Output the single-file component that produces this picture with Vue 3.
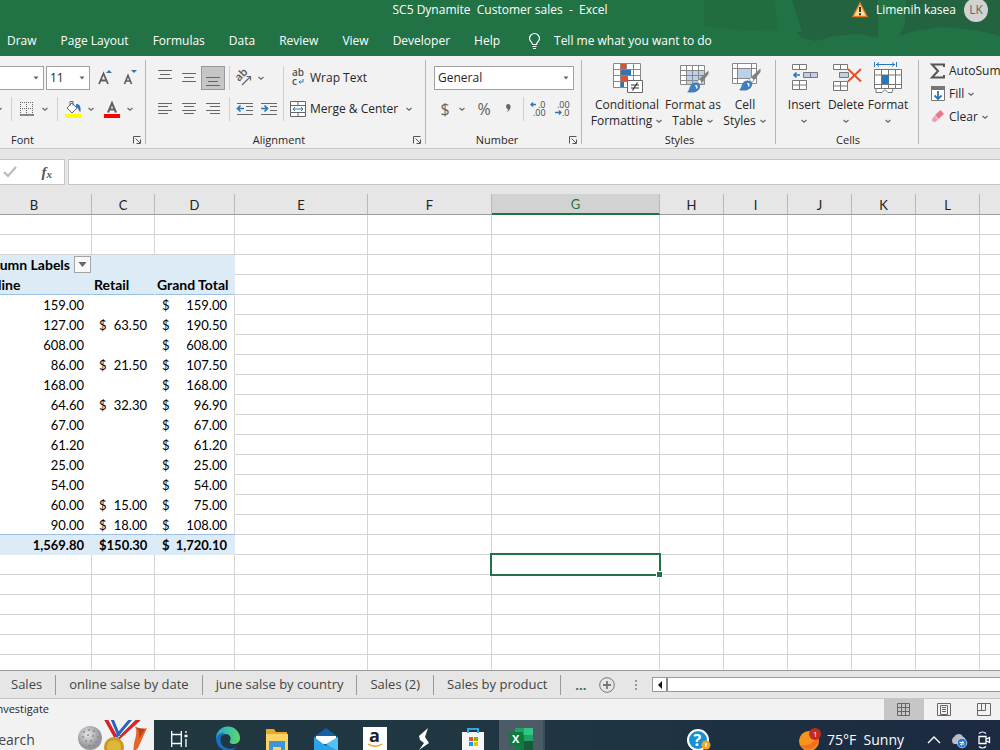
<script setup>
import { ref } from 'vue'

const menu = ['Draw', 'Page Layout', 'Formulas', 'Data', 'Review', 'View', 'Developer', 'Help']
const fontName = ref('Calibri')
const fontSize = ref('11')
const format = ref('General')
const formula = ref('')
const query = ref('')

const columns = ['B', 'C', 'D', 'E', 'F', 'G', 'H', 'I', 'J', 'K', 'L', 'M']
const records = [
  ['159.00', '', '159.00'],
  ['127.00', '63.50', '190.50'],
  ['608.00', '', '608.00'],
  ['86.00', '21.50', '107.50'],
  ['168.00', '', '168.00'],
  ['64.60', '32.30', '96.90'],
  ['67.00', '', '67.00'],
  ['61.20', '', '61.20'],
  ['25.00', '', '25.00'],
  ['54.00', '', '54.00'],
  ['60.00', '15.00', '75.00'],
  ['90.00', '18.00', '108.00'],
  ['1,569.80', '150.30', '1,720.10']
]
const rows = Array.from({ length: 60 }, (_, i) => {
  if (i === 2) return { kind: 'head', cells: ['Column Labels', '', ''] }
  if (i === 3) return { kind: 'head last', cells: ['Online', 'Retail', 'Grand Total'] }
  if (i >= 4 && i <= 16) {
    const kind = i === 16 ? 'total' : i === 15 ? 'data before-total' : 'data'
    return { kind, cells: records[i - 4] }
  }
  return { kind: 'blank', cells: ['', '', ''] }
})
const sheets = ['Sales', 'online salse by date', 'june salse by country', 'Sales (2)', 'Sales by product']
</script>

<template>
  <div class="app">
    <svg class="defs" aria-hidden="true">
      <symbol id="chev" viewBox="0 0 8 8"><path d="M1.500 3 4 5.300 6.500 3" fill="none" stroke="#666" stroke-width="1.200" /></symbol>
      <symbol id="tri" viewBox="0 0 8 8"><path d="M1.500 2.500h5L4 5.500z" fill="#666" /></symbol>
      <symbol id="launch" viewBox="0 0 10 10"><path d="M1.500 8.500v-7h7M3.500 3.500 8 8M8.500 4.500v4H4.500" fill="none" stroke="#555" /></symbol>
      <symbol id="brush" viewBox="0 0 24 24">
        <path d="M22.500.500 12 10l3 3.500L22.500 4z" fill="#808080" />
        <path d="m13.500 9-2.500 2.500 3 3 2-2.500z" fill="#fff" stroke="#808080" stroke-width=".8" />
        <path d="M1 22c3-1 2-9 8-9.500 5-.2 6.500 4 4 7-3 3.500-8 3.500-12 2.500z" fill="#3f7fbf" />
        <path d="M9 15c3-.5 3.500 2.500 1.500 4-.5-2-1-2.500-1.500-4z" fill="#fff" />
      </symbol>
    </svg>

    <header class="top">
      <svg class="art" viewBox="0 0 300 56" preserveAspectRatio="xMaxYMin slice" aria-hidden="true">
        <path d="M4 0h70l4 30-30 1-44-5z" fill="#226c42" />
        <path d="M92 0h86v38l-20-4-24 2-18 5-14-3-6-6h6z" fill="#23633f" />
        <path d="M206 0h94v36l-24-6-34-3-28 4-15 5 6-12z" fill="#23633f" />
      </svg>
      <div class="title-row">
        <span class="title">SC5 Dynamite&nbsp; Customer sales&nbsp; -&nbsp; Excel</span>
        <div class="account">
          <svg width="16" height="16" viewBox="0 0 16 16"><path d="M8 1 15 14.500H1z" fill="#ffdf9a" stroke="#e87722" stroke-width="1.400" /><path d="M8 5v5M8 11.200v2" stroke="#333" stroke-width="2" /></svg>
          <span>Limenih kasea</span>
          <span class="avatar">LK</span>
        </div>
      </div>
      <nav class="menu">
        <button v-for="m in menu" :key="m">{{ m }}</button>
        <button class="tell">
          <svg width="13" height="17" viewBox="0 0 13 17" fill="none" stroke="#fff" stroke-width="1.200"><path d="M4.500 11.500C4.500 9 1.500 8.500 1.500 5.500a5 5 0 0 1 10 0c0 3-3 3.500-3 6zM4.500 13.500h4M5 15.500h3" /></svg>
          Tell me what you want to do
        </button>
      </nav>
    </header>

    <section class="ribbon">
      <div class="group font-group">
        <div class="rows end">
          <div class="row first">
            <label class="combo font-name"><select v-model="fontName" aria-label="Font"><option>Calibri</option></select><svg width="8" height="8"><use href="#tri" /></svg></label>
            <label class="combo font-size"><select v-model="fontSize" aria-label="Font size"><option>11</option></select><svg width="8" height="8"><use href="#tri" /></svg></label>
            <button class="ib w25" aria-label="Increase font size"><svg width="16" height="18" viewBox="0 0 16 18"><path d="M2 15 6.500 4.500 11 15M3.500 11.500h6" fill="none" stroke="#606060" stroke-width="1.800" /><path d="m9 4 3-3 3 3z" fill="#2e75b6" /></svg></button>
            <button class="ib w25" aria-label="Decrease font size"><svg width="16" height="18" viewBox="0 0 16 18"><path d="M2.500 15 6 6.500 9.500 15M4 12h4.500" fill="none" stroke="#606060" stroke-width="1.700" /><path d="m9 1 3 3 3-3z" fill="#2e75b6" /></svg></button>
          </div>
          <div class="row">
            <button class="cb wide" aria-label="Underline options"><svg width="8" height="8"><use href="#chev" /></svg></button>
            <i class="sep s10"></i>
            <button class="ib" aria-label="Borders"><svg width="14" height="14" viewBox="0 0 14 14" stroke="#666" fill="none"><path d="M.5 0v13M6.500 0v13M12.500 0v13M0 .5h13M0 6.500h13" stroke-dasharray="1 1" /><path d="M0 13h14" stroke-width="1.500" /></svg></button>
            <button class="cb wide" aria-label="Border options"><svg width="8" height="8"><use href="#chev" /></svg></button>
            <i class="sep s10"></i>
            <button class="ib" aria-label="Fill colour"><svg width="18" height="18" viewBox="0 0 18 18"><path d="m3 8 5-5 5 5-5 5z" fill="#fff" stroke="#666" /><path d="M6 6V1.500h3v4" fill="none" stroke="#666" /><path d="M12 4c4 0 5 2.500 4.500 8-2.500-1-1.500-4-4.500-5z" fill="#3a76b0" /><path d="M1 14h16v4H1z" fill="#ff0" /></svg></button>
            <button class="cb wide gap3" aria-label="Fill options"><svg width="8" height="8"><use href="#chev" /></svg></button>
            <button class="ib" aria-label="Font colour"><svg width="18" height="18" viewBox="0 0 18 18"><path d="M5 12.500 9 3l4 9.500M6.500 9.500h5" fill="none" stroke="#606060" stroke-width="2" /><path d="M1 14h16v4H1z" fill="red" /></svg></button>
            <button class="cb wide" aria-label="Font colour options"><svg width="8" height="8"><use href="#chev" /></svg></button>
          </div>
        </div>
        <div class="caption"><span>Font</span><button aria-label="Font settings"><svg width="10" height="10"><use href="#launch" /></svg></button></div>
      </div>

      <div class="group align-group">
        <div class="split">
          <div class="rows">
            <div class="row">
              <button class="ib w24" aria-label="Top align"><svg width="16" height="18" viewBox="0 0 16 18"><path d="M1 1.500h14M3 5.500h10M1 9.500h14" stroke="#666" /></svg></button>
              <button class="ib w24" aria-label="Middle align"><svg width="16" height="18" viewBox="0 0 16 18"><path d="M1 4.500h14M3 8.500h10M1 12.500h14" stroke="#666" /></svg></button>
              <button class="ib w24 on" aria-label="Bottom align"><svg width="16" height="18" viewBox="0 0 16 18"><path d="M1 8.500h14M3 12.500h10M1 16.500h14" stroke="#666" /></svg></button>
              <i class="sep s8"></i>
              <button class="ib" aria-label="Orientation"><svg width="18" height="18" viewBox="0 0 18 18"><text x="0" y="0" transform="translate(4 13) rotate(-45)" class="glyph slant">ab</text><path d="m7 16 8-8M15.500 11.500v-4h-4" fill="none" stroke="#666" stroke-width="1.200" /></svg></button>
              <button class="cb" aria-label="Orientation options"><svg width="8" height="8"><use href="#chev" /></svg></button>
            </div>
            <div class="row">
              <button class="ib w24" aria-label="Align left"><svg width="16" height="14" viewBox="0 0 16 14"><path d="M1 1.500h14M1 4.500h10M1 8.500h14M1 11.500h10" stroke="#666" /></svg></button>
              <button class="ib w24" aria-label="Centre"><svg width="16" height="14" viewBox="0 0 16 14"><path d="M1 1.500h14M3 4.500h10M1 8.500h14M3 11.500h10" stroke="#666" /></svg></button>
              <button class="ib w24" aria-label="Align right"><svg width="16" height="14" viewBox="0 0 16 14"><path d="M1 1.500h14M5 4.500h10M1 8.500h14M5 11.500h10" stroke="#666" /></svg></button>
              <i class="sep s8"></i>
              <button class="ib w24" aria-label="Decrease indent"><svg width="18" height="14" viewBox="0 0 18 14"><path d="M1 1.500h16M10 4.500h7M10 8.500h7M1 12.500h16" stroke="#666" /><path d="M8 6.500H2M4.500 3.500l-3 3 3 3" fill="none" stroke="#2e75b6" stroke-width="1.700" /></svg></button>
              <button class="ib w24" aria-label="Increase indent"><svg width="18" height="14" viewBox="0 0 18 14"><path d="M1 1.500h16M10 4.500h7M10 8.500h7M1 12.500h16" stroke="#666" /><path d="M1 6.500h6M4.500 3.500l3 3-3 3" fill="none" stroke="#2e75b6" stroke-width="1.700" /></svg></button>
            </div>
          </div>
          <i class="sep tall"></i>
          <div class="rows wraps">
            <button class="tb"><svg width="16" height="18" viewBox="0 0 16 18"><text x="2" y="7" class="glyph">ab</text><text x="2" y="16" class="glyph">c</text><path d="M13 10v3H9M10.500 11.500 9 13l1.500 1.500" fill="none" stroke="#2e75b6" /></svg>Wrap Text</button>
            <button class="tb"><svg width="16" height="16" viewBox="0 0 16 16"><path d="M.5.500h15v15H.5zM.5 4.500h15M.5 11.500h15M8 .5v4M8 11.500v4" fill="#fff" stroke="#666" /><path d="M3 8h10M5 6 3 8l2 2M11 6l2 2-2 2" fill="none" stroke="#2e75b6" /></svg>Merge &amp; Center<svg class="far" width="8" height="8"><use href="#chev" /></svg></button>
          </div>
        </div>
        <div class="caption"><span>Alignment</span><button aria-label="Alignment settings"><svg width="10" height="10"><use href="#launch" /></svg></button></div>
      </div>

      <div class="group number-group">
        <div class="rows">
          <div class="row">
            <label class="combo format"><select v-model="format" aria-label="Number format"><option>General</option></select><svg width="8" height="8"><use href="#tri" /></svg></label>
          </div>
          <div class="row">
            <button class="ib big-glyph">$</button>
            <button class="cb gap4" aria-label="Currency options"><svg width="8" height="8"><use href="#chev" /></svg></button>
            <button class="ib w24 big-glyph">%</button>
            <button class="ib w24" aria-label="Comma style"><svg width="8" height="12" viewBox="0 0 8 12"><path d="M4 1c3 0 3 3.500 2 5S4 8.500 2.500 9c1-1 1.500-1.500 1.500-3C1.500 6 1.500 1 4 1z" fill="#666" /></svg></button>
            <i class="sep s6"></i>
            <button class="ib w24" aria-label="Increase decimal"><svg width="18" height="18" viewBox="0 0 18 18"><text x="9" y="8" class="dec">.0</text><text x="4" y="16" class="dec">.00</text><path d="M7 4.500H2M4 2.500l-2 2 2 2" fill="none" stroke="#2e75b6" stroke-width="1.300" /></svg></button>
            <button class="ib w24" aria-label="Decrease decimal"><svg width="18" height="18" viewBox="0 0 18 18"><text x="4" y="8" class="dec">.00</text><text x="9" y="16" class="dec">.0</text><path d="M2 12.500h6M6 10.500l2 2-2 2" fill="none" stroke="#2e75b6" stroke-width="1.300" /></svg></button>
          </div>
        </div>
        <div class="caption"><span>Number</span><button aria-label="Number settings"><svg width="10" height="10"><use href="#launch" /></svg></button></div>
      </div>

      <div class="group styles-group">
        <div class="bigs">
          <button class="big w68">
            <svg width="32" height="32" viewBox="0 0 32 32"><path d="M2 1h27v25H2z" fill="#fff" /><path d="M9 1h6v6H9zM9 13h8v6H9z" fill="#e0522d" /><path d="M9 7h11v6H9zM9 19h4v6H9z" fill="#2e75b6" /><path d="M2.500 1.500h27v24h-27zM2.500 7.500h27M2.500 13.500h27M2.500 19.500h27M9.500 1.500v24M22.500 1.500v24M15.500 1.500v6" fill="none" stroke="#888" /><path d="M16.500 18.500h15v12h-15z" fill="#fff" stroke="#666" /><path d="M20 23h8M20 26h8M26.500 20.500l-5 8" stroke="#333" stroke-width="1.200" /></svg>
            <span>Conditional</span><span>Formatting <svg width="8" height="8"><use href="#chev" /></svg></span>
          </button>
          <button class="big w64">
            <svg width="32" height="32" viewBox="0 0 32 32"><path d="M3 3h25v20H3z" fill="#fff" /><path d="M10 8h18v15H10z" fill="#bcd0ea" /><path d="M3.500 3.500h24v19h-24zM3.500 8.500h24M3.500 13.500h24M3.500 18.500h24M9.500 3.500v19M15.500 3.500v19M21.500 3.500v19" fill="none" stroke="#888" /><use href="#brush" x="9" y="8" width="24" height="24" /></svg>
            <span>Format as</span><span>Table <svg width="8" height="8"><use href="#chev" /></svg></span>
          </button>
          <button class="big w40">
            <svg width="32" height="32" viewBox="0 0 32 32"><path d="M3.500 1.500h24v20h-24z" fill="#fff" stroke="#888" /><path d="M8 7h15v9H8z" fill="#bcd0ea" /><path d="M3.500 6.500h24M3.500 16.500h24M8.500 1.500v20M22.500 1.500v20" fill="none" stroke="#888" /><use href="#brush" x="9" y="6" width="24" height="24" /></svg>
            <span>Cell</span><span>Styles <svg width="8" height="8"><use href="#chev" /></svg></span>
          </button>
        </div>
        <div class="caption"><span>Styles</span></div>
      </div>

      <div class="group cells-group">
        <div class="bigs">
          <button class="big w42">
            <svg width="32" height="32" viewBox="0 0 32 32" fill="#fff" stroke="#777"><path d="M4.500 2.500h14v5h-14zM11.500 2.500v5M4.500 18.500h14v9h-14zM11.500 18.500v9M4.500 23h14" /><path d="M15.500 10.500h14v5h-14zM22.500 10.500v5" fill="#bcd0ea" /><path d="M12 13H6M8.500 10.500 6 13l2.500 2.500" fill="none" stroke="#2e75b6" stroke-width="1.700" /></svg>
            <span>Insert</span><span><svg width="8" height="8"><use href="#chev" /></svg></span>
          </button>
          <button class="big w42">
            <svg width="32" height="32" viewBox="0 0 32 32" fill="#fff" stroke="#777"><path d="M3.500 2.500h14v5h-14zM10.500 2.500v5M3.500 19.500h14v9h-14zM10.500 19.500v9M3.500 24h14" /><path d="M9.500 10.500h9v5h-9z" fill="#bcd0ea" /><path d="m18 7 13 12.500M31 7 18 19.500" stroke="#e0522d" stroke-width="2" /></svg>
            <span>Delete</span><span><svg width="8" height="8"><use href="#chev" /></svg></span>
          </button>
          <button class="big w42">
            <svg width="32" height="32" viewBox="0 0 32 32" fill="#fff" stroke="#777"><path d="M2.500 7.500h27v19h-27zM9.500 7.500v19M16.500 7.500v19M23.500 7.500v19M2.500 13h27M2.500 22.500h27M4 26.500v4h6l3-3 3 3h4l1-4" /><path d="M10 13h7v9h-7z" fill="#2e75b6" stroke="none" /><path d="M2.500 0v5M24.500 0v5M4 2.500h19M7 .5l-2.500 2L7 4.500M20 .5l2.500 2-2.500 2" fill="none" stroke="#2e75b6" /></svg>
            <span>Format</span><span><svg width="8" height="8"><use href="#chev" /></svg></span>
          </button>
        </div>
        <div class="caption"><span>Cells</span></div>
      </div>

      <div class="group edit-group">
        <button class="eb"><svg width="16" height="16" viewBox="0 0 16 16"><path d="M14 4V1.500H2l6 6.500-6 6.500h12V12" fill="none" stroke="#555" stroke-width="2" /></svg>AutoSum</button>
        <button class="eb"><svg width="16" height="16" viewBox="0 0 16 16"><path d="M1.500 1.500h13v13h-13z" fill="#fff" stroke="#777" /><path d="M1 0h14v4H1z" fill="#777" /><path d="M8 5v8M4.500 9.500 8 13l3.500-3.500" fill="none" stroke="#2e75b6" stroke-width="1.800" /></svg>Fill<svg width="8" height="8"><use href="#chev" /></svg></button>
        <button class="eb"><svg width="16" height="16" viewBox="0 0 16 16"><path d="m5 6 5.500-5 3.500 4-5.500 5z" fill="#e8788e" /><path d="m4.500 6.500 3.500 4-2.500 2.500H3.500l-2-2z" fill="#f0a0b0" /></svg>Clear<svg width="8" height="8"><use href="#chev" /></svg></button>
      </div>
    </section>

    <section class="formula">
      <div class="fx">
        <button aria-label="Enter"><svg width="16" height="14" viewBox="0 0 16 14"><path d="m2 7 4 4 8-9" fill="none" stroke="#bbb" stroke-width="2.200" /></svg></button>
        <button class="fn" aria-label="Insert function"><i>f</i><small>x</small></button>
      </div>
      <input v-model="formula" aria-label="Formula bar" />
    </section>

    <main class="sheet">
      <table>
        <colgroup><col v-for="c in columns" :key="c" :class="'c' + c" /></colgroup>
        <thead>
          <tr><th v-for="c in columns" :key="c" :class="{ active: c === 'G' }">{{ c }}</th></tr>
        </thead>
        <tbody>
          <tr v-for="(r, i) in rows" :key="i" :class="r.kind">
            <td v-for="(c, j) in columns" :key="c" :class="{ pv: j < 3, edge: j === 2 }">
              <template v-if="j < 3">
                <div v-if="r.kind.startsWith('head')" class="lab"><span>{{ r.cells[j] }}</span><button v-if="i === 2 && j === 0" aria-label="Filter columns"><svg width="13" height="13"><use href="#tri" /></svg></button></div>
                <div v-else-if="r.cells[j]" class="num"><span v-if="j">$</span><span class="val">{{ r.cells[j] }}</span></div>
              </template>
              <div v-if="i === 17 && c === 'G'" class="cursor"></div>
            </td>
          </tr>
        </tbody>
      </table>
    </main>

    <nav class="tabs">
      <button v-for="s in sheets" :key="s">{{ s }}</button>
      <span class="more">...</span>
      <button class="add" aria-label="New sheet"><svg width="16" height="16" viewBox="0 0 16 16" fill="none" stroke="#777"><circle cx="8" cy="8" r="7.300" /><path d="M8 4v8M4 8h8" stroke-width="1.800" /></svg></button>
      <svg class="dots" width="4" height="14" viewBox="0 0 4 14" fill="#999"><path d="M1 2h2v2H1zM1 6h2v2H1zM1 10h2v2H1z" /></svg>
      <div class="scroll"><button aria-label="Scroll left"><svg width="8" height="8" viewBox="0 0 8 8"><path d="M6 0v8L2 4z" fill="#111" /></svg></button><div class="thumb"></div></div>
    </nav>

    <footer class="status">
      <div class="access"><span>Accessibility: Investigate</span></div>
      <div class="views">
        <button class="on" aria-label="Normal view"><svg width="14" height="14" viewBox="0 0 14 14"><path d="M.5.500h12v12H.5zM.5 4.500h12M.5 8.500h12M4.500.500v12M8.500.500v12" fill="none" stroke="#666" /></svg></button>
        <button aria-label="Page layout view"><svg width="14" height="14" viewBox="0 0 14 14"><path d="M.5.500h13v12H.5zM3.500 2.500h7v9h-7zM5 4.500h4M5 6.500h4M5 8.500h4" fill="none" stroke="#666" /></svg></button>
        <button aria-label="Page break view"><svg width="14" height="14" viewBox="0 0 14 14"><path d="M.5.500h13v12H.5zM.5 7.500h8v-7M4.500.500v7" fill="none" stroke="#666" /></svg></button>
      </div>
    </footer>

    <footer class="taskbar">
      <label class="search">
        <input v-model="query" placeholder="Type here to search" aria-label="Type here to search" />
        <svg width="72" height="30" viewBox="0 0 72 30">
          <defs><radialGradient id="ball" cx=".4" cy=".35"><stop offset="0" stop-color="#e8e8ea" /><stop offset="1" stop-color="#96969c" /></radialGradient></defs>
          <circle cx="12" cy="18" r="12" fill="url(#ball)" />
          <path d="M5 12h2M10 10h2M15 11h2M4 17h2M9 15h2M14 16h2M19 17h2M7 21h2M12 21h2M17 22h2M10 26h2M15 26h2" stroke="#88888f" stroke-width="1.500" />
          <path d="m28-1 10 18M61-1 40 18" stroke="#d8232a" stroke-width="4" /><path d="m31-1 10 18M57-1 38 18" stroke="#fff" stroke-width="2" /><path d="m34-1 7 17M53-1 38 17" stroke="#2b62c4" stroke-width="3" />
          <circle cx="36" cy="27" r="10" fill="#c99a21" /><circle cx="36" cy="27" r="7" fill="#dfb63c" />
          <path d="M57 6c4 3 9 3 12 2l-9 20-5 5 1-9c1-6 4-11 1-18z" fill="#e8632b" /><path d="m59 8 8 1-6 10c1-5 0-8-2-11z" fill="#b8401b" />
        </svg>
      </label>
      <button class="slot" aria-label="Task view"><svg width="18" height="18" viewBox="0 0 18 18" fill="none" stroke="#fff" stroke-width="1.300"><path d="M1 4.500h11M1 13.500h11M1.700 1v3.500M11.300 1v3.500M1.700 13.500V17M11.300 13.500V17M1.700 4.500v9M11.300 4.500v9M16 1v2M16 9v8" /><path d="M14.500 6h3" stroke-width="2.500" /></svg></button>
      <button class="slot" aria-label="Edge"><svg width="26" height="26" viewBox="0 0 26 26"><defs><linearGradient id="edge" x1="0" x2="1"><stop offset="0" stop-color="#1fa9e0" /><stop offset="1" stop-color="#5fd867" /></linearGradient></defs><path d="M1 13a12 12 0 0 1 24-1c0 4-3 6-6.500 6-3 0-4.500-1.500-3.500-3 2-4-1-7-4-7-5 0-9 3-10 5z" fill="url(#edge)" /><path d="M1 13c1-5 6-7 9-6-4 1-6 7-3 12 3 4 9 5 15 2-7 7-20 4-21-8z" fill="#1370c4" /></svg></button>
      <button class="slot" aria-label="File Explorer"><svg width="24" height="24" viewBox="0 0 24 24"><path d="M1 2h8l2 3h11v17H1z" fill="#e9a82b" /><path d="M1 7h22v16H1z" fill="#fbd466" /><path d="M4 24V14h16v10h-4v-4h-8v4z" fill="#3f95dc" /></svg></button>
      <button class="slot" aria-label="Mail"><svg width="26" height="24" viewBox="0 0 26 24"><path d="M1 10 13 1l12 9v14H1z" fill="#1660a8" /><path d="M3 9h20v8H3z" fill="#fff" /><path d="m1 10 12 9L25 10v14H1z" fill="#2ba4e6" /><path d="m25 24-12-7 12-7z" fill="#52c1f5" /></svg></button>
      <button class="slot" aria-label="Amazon"><span class="amazon">a<svg width="16" height="5" viewBox="0 0 16 5"><path d="M1 1c4 3 10 3 14 0" fill="none" stroke="#f49b1a" stroke-width="1.500" /></svg></span></button>
      <button class="slot" aria-label="Studio"><svg width="14" height="22" viewBox="0 0 14 22"><path d="M11 0 2 8l1 4 4 3-5 7 10-7-4-6z" fill="#fff" /></svg></button>
      <button class="slot" aria-label="Store"><svg width="24" height="24" viewBox="0 0 24 24"><path d="M1 5h22v19H1z" fill="#f6f6f6" /><path d="M7 6V2h10v4" fill="none" stroke="#29a9e8" stroke-width="2" /><path d="M8 10h4v4H8z" fill="#f25022" /><path d="M13 10h4v4h-4z" fill="#7fba00" /><path d="M8 15h4v4H8z" fill="#00a4ef" /><path d="M13 15h4v4h-4z" fill="#ffb900" /></svg></button>
      <button class="slot open" aria-label="Excel"><svg width="24" height="24" viewBox="0 0 24 24"><path d="M6 1h18v23H6z" fill="#21a366" /><path d="M15 1h9v7h-9z" fill="#33c481" /><path d="M15 14h9v10h-9z" fill="#185c37" /><path d="M6 8h9v16H6z" fill="#107c41" /><path d="M0 5h14v14H0z" fill="#0f7a3f" /><text x="3" y="16" class="xl">X</text></svg></button>
      <div class="tray">
        <button aria-label="Get help"><svg width="24" height="24" viewBox="0 0 24 24"><circle cx="11" cy="12" r="10" fill="#1492d8" stroke="#fff" stroke-width="2" /><text x="6.500" y="18" class="help">?</text><circle cx="19" cy="17" r="4.500" fill="#f2a51c" /><path d="M19 15v4" stroke="#fff" stroke-width="1.500" /></svg></button>
        <button class="weather"><svg width="24" height="24" viewBox="0 0 24 24"><circle cx="11" cy="13" r="10" fill="#f7941e" /><path d="M2 17c8 2 14-3 18-8a10 10 0 0 1-18 8z" fill="#f37021" /><circle cx="17" cy="6" r="6" fill="#c42b1c" /><text x="15" y="9" class="badge">1</text></svg><span>75°F&nbsp; Sunny</span></button>
        <button aria-label="Hidden icons"><svg width="14" height="10" viewBox="0 0 14 10"><path d="m1 8 6-6 6 6" fill="none" stroke="#fff" stroke-width="1.400" /></svg></button>
        <button aria-label="OneDrive"><svg width="18" height="16" viewBox="0 0 18 16"><path d="M4 12a4 4 0 0 1 0-7c2-4 8-4 9 0 3 0 3 5 1 7z" fill="#b8bcc0" /><circle cx="12" cy="11" r="4.800" fill="#1f78d1" stroke="#fff" stroke-width=".6" /><path d="M9.500 10.500h4l-1-1.500M14.500 12h-4l1 1.500" fill="none" stroke="#fff" /></svg></button>
        <button aria-label="Meet now"><svg width="14" height="18" viewBox="0 0 14 18" fill="none" stroke="#fff" stroke-width="1.300"><path d="M2 5.500h7v7H2zM9.500 8l3-1.500v5l-3-1.500M2 2.500c2-1.800 5-1.800 7 0M2 15.500c2 1.800 5 1.800 7 0" /></svg></button>
      </div>
    </footer>
  </div>
</template>

<style>
html, body { height: 100%; overflow: hidden; }
</style>

<style scoped>
.app { height: 100vh; display: flex; flex-direction: column; overflow: hidden; background: #e6e6e6; font: 12px/16px "Open Sans", "Noto Sans", sans-serif; color: #262626; }
.app * { box-sizing: border-box; }
.defs { position: absolute; width: 0; height: 0; }
button { border: 0; padding: 0; margin: 0; background: none; font: inherit; color: inherit; display: flex; align-items: center; white-space: nowrap; flex: none; }
svg { flex: none; display: block; overflow: visible; }
.search svg, .art { overflow: hidden; }
input, select { font: inherit; color: inherit; border: 0; outline: 0; }

.top { position: relative; background: #217346; color: #fff; flex: none; }
.art { position: absolute; right: 0; top: 0; width: 300px; height: 56px; }
.title-row { position: relative; height: 20px; display: grid; grid-template-columns: 1fr auto 1fr; grid-template-rows: 20px; align-items: center; }
.title { grid-column: 2; }
.account { display: flex; align-items: center; justify-content: flex-end; gap: 8px; height: 20px; padding-right: 12px; }
.avatar { width: 24px; height: 24px; flex: none; border-radius: 50%; background: #d2d2d2; color: #666; display: grid; place-items: center; }
.menu { position: relative; height: 36px; padding: 6px 0 0 7px; display: flex; gap: 24px; }
.tell { gap: 13px; margin-left: 4px; }

.ribbon { display: flex; height: 93px; flex: none; background: #f3f2f2; border-bottom: 1px solid #c8c8c8; overflow: hidden; }
.group { position: relative; display: flex; flex-direction: column; justify-content: space-between; flex: none; padding-top: 10px; }
.group:not(.edit-group)::after { content: ""; position: absolute; right: 0; top: 4px; bottom: 4px; width: 1px; background: #b5b5b5; }
.font-group { width: 233px; margin-left: -87px; }
.align-group { width: 280px; padding-left: 7px; }
.number-group { width: 156px; padding-left: 8px; }
.styles-group { width: 194px; padding-top: 6px; }
.cells-group { width: 143px; padding-top: 6px; }
.edit-group { flex: 1; padding: 3px 0 0 11px; justify-content: flex-start; }
.rows { display: flex; flex-direction: column; gap: 7px; }
.row { display: flex; height: 24px; align-items: center; }
.end .row { justify-content: flex-end; padding-right: 9px; }
.end .first { padding-right: 4px; }
.split { display: flex; }
.sep { align-self: stretch; flex: none; display: flex; justify-content: center; }
.sep::before { content: ""; width: 1px; background: #cfcfcf; }
.s10 { width: 10px; } .s8 { width: 8px; } .s6 { width: 6px; } .tall { width: 5px; }
.combo { position: relative; display: flex; align-items: center; height: 24px; background: #fff; border: 1px solid #a0a0a0; }
.combo select { appearance: none; width: 100%; height: 100%; padding: 0 16px 0 3px; background: none; }
.combo svg { position: absolute; right: 3px; pointer-events: none; }
.font-name { flex: 1; margin-right: 2px; }
.font-size { width: 44px; margin-right: 2px; }
.format { width: 140px; }
.ib { width: 22px; height: 24px; justify-content: center; }
.w24 { width: 24px; } .w25 { width: 25px; }
.on { background: #c6c6c6; }
.ib.on { border: 1px solid #999; }
.cb { width: 12px; height: 24px; justify-content: center; }
.wide { width: 14px; }
.gap3 { margin-right: 3px; } .gap4 { margin-right: 4px; }
.glyph { font: 600 10px "Open Sans", sans-serif; fill: #555; }
.slant { font-size: 11px; }
.dec { font: 9px "Open Sans", sans-serif; fill: #444; }
.big-glyph { font-size: 16px; color: #606060; }
.wraps { width: 130px; padding-left: 4px; }
.tb { height: 24px; gap: 4px; }
.far { margin-left: 3px; }
.caption { display: flex; height: 17px; align-items: center; margin-right: -1px; }
.align-group .caption { margin-left: -7px; } .number-group .caption { margin-left: -8px; }
.caption span { flex: 1; text-align: center; font-size: 11px; line-height: 16px; }
.caption button { width: 14px; margin-right: 1px; }
.bigs { display: flex; }
.styles-group .bigs { padding-left: 11px; } .cells-group .bigs { padding-left: 7px; }
.big { flex-direction: column; }
.big > svg { margin-bottom: 3px; }
.big span { display: flex; align-items: center; justify-content: center; gap: 3px; height: 16px; }
.w68 { width: 68px; } .w64 { width: 64px; } .w40 { width: 40px; } .w42 { width: 42px; }
.eb { height: 23px; gap: 3px; }

.formula { display: flex; flex: none; gap: 3px; padding: 10px 0 9px; height: 45px; }
.fx { width: 65px; background: #fff; border: 1px solid #c6c6c6; border-left: 0; display: flex; align-items: center; justify-content: space-between; padding: 0 12px 0 2px; }
.fn { font: 700 15px "Liberation Serif", serif; color: #555; }
.fn small { font-size: 11px; font-style: italic; margin-top: 4px; }
.formula input { flex: 1; min-width: 0; background: #fff; border: 1px solid #c6c6c6; border-right: 0; padding: 0 6px; }

.sheet { flex: 1; min-height: 0; overflow: hidden; background: #fff; font: 13px/18px Lato, sans-serif; color: #000; }
table { table-layout: fixed; border-spacing: 0; width: 1067px; margin-left: -23px; }
.cB { width: 115px; } .cC { width: 63px; } .cD { width: 80px; } .cE { width: 133px; } .cF { width: 124px; } .cG { width: 168px; }
.cH, .cI, .cJ, .cK, .cL, .cM { width: 64px; }
th { height: 21px; padding: 1px 0 0; background: #e6e6e6; border-right: 1px solid #b8b8b8; border-bottom: 1px solid #9a9a9a; font-weight: 400; color: #222; }
th.active { padding: 0; background: #d2d2d2; color: #217346; border-bottom: 2px solid #217346; }
td { position: relative; height: 20px; padding: 0; border-right: 1px solid #d4d4d4; border-bottom: 1px solid #d4d4d4; }
.data .pv { border-color: #fff; }
.data .pv.edge { border-right-color: #d4d4d4; }
.head .pv, .total .pv { background: #ddebf7; border-color: #ddebf7; font-weight: 700; }
.last .pv, .before-total .pv { border-bottom-color: #9bc2e6; }
.lab { display: flex; align-items: center; height: 19px; padding-left: 2px; font-size: 14px; white-space: nowrap; }
.lab button { width: 17px; height: 17px; margin-left: auto; justify-content: center; background: #f7f9fb; border: 1px solid #a5a5a5; }
.num { display: flex; height: 19px; align-items: center; padding: 0 7px; }
.val { margin-left: auto; }
.cursor { position: absolute; inset: -2px; border: 2px solid #217346; z-index: 1; }
.cursor::after { content: ""; position: absolute; right: -3px; bottom: -3px; width: 5px; height: 5px; background: #217346; outline: 1px solid #fff; }

.tabs { flex: none; height: 29px; display: flex; align-items: center; border-top: 1px solid #9a9a9a; border-bottom: 1px solid #c6c6c6; font-size: 13px; color: #444; }
.tabs > button { height: 20px; padding: 0 13px 2px; border-right: 1px solid #999; }
.tabs > button:first-child { padding-left: 11px; }
.more { margin-left: 14px; font-weight: 700; color: #217346; }
.tabs > .add { padding: 0; border: 0; margin-left: 13px; }
.dots { margin-left: 19px; }
.scroll { flex: 1; display: flex; margin-left: 14px; height: 15px; background: #fff; border: 1px solid #999; border-right: 0; }
.scroll button { width: 15px; justify-content: center; border-right: 2px solid #888; }

.status { flex: none; height: 21px; display: flex; justify-content: space-between; background: #f3f2f2; font-size: 11px; line-height: 20px; }
.access { width: 49px; display: flex; justify-content: flex-end; overflow: hidden; white-space: nowrap; }
.views { display: flex; margin-right: -4px; }
.views button { width: 40px; justify-content: center; }

.taskbar { flex: none; height: 30px; display: flex; overflow: hidden; color: #fff; background: linear-gradient(90deg, #20383f, #203743 50%, #1b2941); }
.search { width: 154px; flex: none; display: flex; align-items: center; overflow: hidden; background: #f2f2f2; }
.search input { width: 172px; flex: none; margin-left: -94px; background: none; font-size: 14px; line-height: 20px; padding: 10px 0 0; color: #444; }
.search input::placeholder { color: #444; opacity: 1; }
.slot { width: 49px; height: 38px; justify-content: center; }
.open { width: 46px; margin-left: 2px; background: #4b5c66; border-right: 2px solid #3c4d59; }
.amazon { width: 24px; height: 24px; background: #fff; color: #222; font: 700 18px/16px "Open Sans", sans-serif; display: flex; flex-direction: column; align-items: center; }
.xl { font: 700 11px "Open Sans", sans-serif; fill: #fff; }
.help { font: 700 16px "Open Sans", sans-serif; fill: #fff; }
.badge { font: 8px "Open Sans", sans-serif; fill: #fff; }
.tray { margin-left: auto; height: 40px; display: flex; align-items: center; gap: 9px; padding-right: 9px; font-size: 14px; }
.weather { gap: 5px; margin-left: 78px; margin-right: 14px; }
</style>
